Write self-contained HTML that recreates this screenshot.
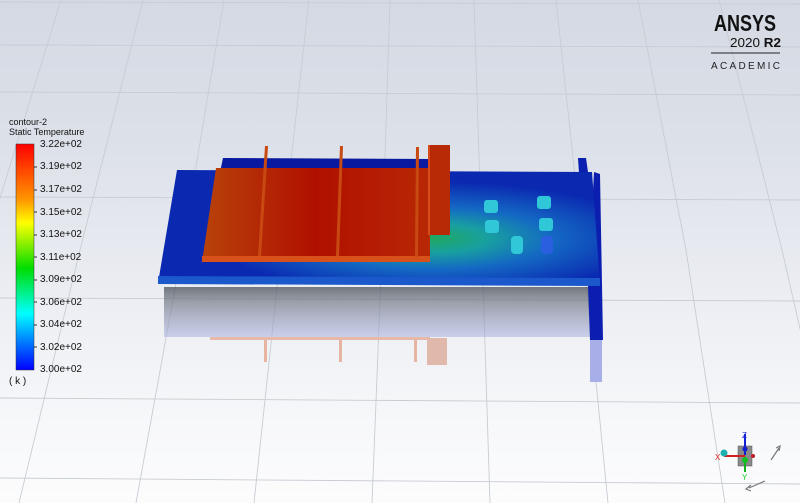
<!DOCTYPE html>
<html><head><style>
html,body{margin:0;padding:0}
body{width:800px;height:503px;overflow:hidden;position:relative;font-family:"Liberation Sans",sans-serif;background:linear-gradient(#d4d9e3 0%,#dde1e9 30%,#eceef3 60%,#f7f8fa 85%,#fcfcfd 100%)}
.t{position:absolute;font-size:10px;color:#111;}
</style></head><body>
<svg width="800" height="503" style="position:absolute;left:0;top:0">
<defs>
<linearGradient id="redg" x1="0" x2="1" y1="0" y2="0">
<stop offset="0" stop-color="#b8420a"/><stop offset="0.5" stop-color="#b01000"/><stop offset="1" stop-color="#b82805"/></linearGradient>
<radialGradient id="plate" cx="0.62" cy="0.6" r="0.5">
<stop offset="0" stop-color="#20a860"/><stop offset="0.25" stop-color="#18a0a0"/><stop offset="0.55" stop-color="#1468c4"/><stop offset="1" stop-color="#0a28b0"/></radialGradient>
<linearGradient id="refl" x1="0" x2="0" y1="0" y2="1">
<stop offset="0" stop-color="#4a5058"/><stop offset="0.3" stop-color="#6c7280" stop-opacity="0.85"/><stop offset="1" stop-color="#a8b0e0" stop-opacity="0.7"/></linearGradient>
<linearGradient id="cb" x1="0" x2="0" y1="0" y2="1">
<stop offset="0" stop-color="#ff0000"/><stop offset="0.25" stop-color="#ff9900"/><stop offset="0.35" stop-color="#ffff00"/><stop offset="0.55" stop-color="#00dd00"/><stop offset="0.75" stop-color="#00ffff"/><stop offset="0.88" stop-color="#0077ff"/><stop offset="1" stop-color="#0000ff"/></linearGradient>
</defs>
<g stroke="#c8ccd3" stroke-width="0.9" fill="none">
<line x1="0" y1="2" x2="800" y2="4"/><line x1="0" y1="45" x2="800" y2="47"/><line x1="0" y1="92" x2="800" y2="95"/><line x1="0" y1="197" x2="800" y2="200"/><line x1="0" y1="298" x2="800" y2="301"/><line x1="0" y1="398" x2="800" y2="403"/><line x1="0" y1="478" x2="800" y2="484"/>
<polyline points="61,0 -16,250"/>
<polyline points="143,0 80,250 19,503"/>
<polyline points="224,0 182,250 136,503"/>
<polyline points="309,0 281,250 254,503"/>
<polyline points="390,0 382,250 372,503"/>
<polyline points="474,0 482,250 490,503"/>
<polyline points="556,0 583,250 608,503"/>
<polyline points="638,0 686,250 725,503"/>
<polyline points="719,0 782,250 840,503"/>
</g>
<!-- reflection -->
<rect x="164" y="287" width="428" height="50" fill="url(#refl)" opacity="0.75"/>
<rect x="590" y="340" width="12" height="42" fill="#a8aee8"/>
<rect x="210" y="337" width="220" height="3" fill="#e8b8a8"/>
<rect x="264" y="340" width="3" height="22" fill="#e6b4a0"/><rect x="339" y="340" width="3" height="22" fill="#e6b4a0"/><rect x="414" y="340" width="3" height="22" fill="#e6b4a0"/>
<rect x="427" y="338" width="20" height="27" fill="#e0b8ac"/>
<!-- back strip -->
<polygon points="223,158 430,159 430,172 220,172" fill="#0a1aa0"/>
<!-- flange -->
<polygon points="578,158 586,158 588,172 579,173" fill="#0a20b0"/>
<polygon points="594,172 600,174 603,340 590,340 588,285" fill="#0c1eb0"/>
<!-- blue plate -->
<polygon points="177,170 592,172 600,284 158,283" fill="url(#plate)"/>
<polygon points="158,276 600,278 600,286 158,284" fill="#1a58cc"/>
<!-- red plate -->
<polygon points="216,168 430,168 430,262 202,262" fill="url(#redg)"/>
<rect x="202" y="256" width="228" height="6" fill="#d8501a"/>
<rect x="428" y="145" width="22" height="90" fill="#b82a05"/>
<rect x="428" y="145" width="2" height="90" fill="#d84a1a"/>
<!-- fins -->
<polygon points="265,146 268,146 261,256 258,256" fill="#c84a12"/>
<polygon points="340,146 343,146 339,256 336,256" fill="#c84a12"/>
<polygon points="416,147 419,147 418,257 415,257" fill="#c84a12"/>
<!-- bumps -->
<g fill="#30c8d8">
<rect x="484" y="200" width="14" height="13" rx="3"/><rect x="485" y="220" width="14" height="13" rx="3"/>
<rect x="537" y="196" width="14" height="13" rx="3"/><rect x="539" y="218" width="14" height="13" rx="3"/>
<rect x="511" y="236" width="12" height="18" rx="4"/>
</g>
<rect x="541" y="236" width="12" height="18" rx="4" fill="#2a60e0"/>
<!-- colorbar -->
<rect x="16" y="144" width="18" height="226" fill="url(#cb)" stroke="#333" stroke-width="0.5"/>
<g stroke="#333" stroke-width="1">
<line x1="34" y1="167" x2="37" y2="167"/><line x1="34" y1="190" x2="37" y2="190"/><line x1="34" y1="212" x2="37" y2="212"/><line x1="34" y1="235" x2="37" y2="235"/><line x1="34" y1="257" x2="37" y2="257"/><line x1="34" y1="280" x2="37" y2="280"/><line x1="34" y1="302" x2="37" y2="302"/><line x1="34" y1="325" x2="37" y2="325"/><line x1="34" y1="347" x2="37" y2="347"/>
</g>
<!-- ANSYS logo -->
<text x="714" y="31" font-family="Liberation Sans" font-weight="bold" font-size="23" fill="#111" textLength="62" lengthAdjust="spacingAndGlyphs">ANSYS</text>
<text x="730" y="47" font-family="Liberation Sans" font-size="13" fill="#111" textLength="51" lengthAdjust="spacingAndGlyphs">2020 <tspan font-weight="bold">R2</tspan></text>
<line x1="711" y1="53" x2="780" y2="53" stroke="#222" stroke-width="1"/>
<text x="711" y="69" font-family="Liberation Sans" font-size="10" fill="#222" textLength="69" lengthAdjust="spacing">ACADEMIC</text>
<!-- triad -->
<rect x="738" y="446" width="14" height="20" fill="#8a8a8a" stroke="#555" stroke-width="0.5"/>
<line x1="745" y1="455" x2="745" y2="434" stroke="#1020d0" stroke-width="2"/>
<circle cx="745" cy="449" r="2.5" fill="#1020d0"/>
<text x="742" y="438" font-size="8" fill="#2030e0" font-family="Liberation Sans">Z</text>
<line x1="745" y1="457" x2="745" y2="472" stroke="#10b020" stroke-width="2"/>
<circle cx="745" cy="460" r="3" fill="#10c020"/>
<text x="742" y="480" font-size="8" fill="#20d020" font-family="Liberation Sans">Y</text>
<line x1="745" y1="456" x2="724" y2="456" stroke="#d02020" stroke-width="2"/>
<circle cx="724" cy="453" r="3.5" fill="#20b0b0"/>
<text x="715" y="460" font-size="8" fill="#e02020" font-family="Liberation Sans">X</text>
<circle cx="753" cy="456" r="2" fill="#c02020"/>
<path d="M771,460 L779,448 M776,448 L780,446 L779,451" stroke="#777" fill="none" stroke-width="1.2"/>
<path d="M765,481 L749,488 M751,485 L746,489 L751,491" stroke="#777" fill="none" stroke-width="1.2"/>
</svg>
<div class="t" style="left:9px;top:117px;font-size:9px">contour-2</div>
<div class="t" style="left:9px;top:127px;font-size:9px">Static Temperature</div>
<div class="t" style="left:40px;top:139px">3.22e+02</div>
<div class="t" style="left:40px;top:161px">3.19e+02</div>
<div class="t" style="left:40px;top:184px">3.17e+02</div>
<div class="t" style="left:40px;top:207px">3.15e+02</div>
<div class="t" style="left:40px;top:229px">3.13e+02</div>
<div class="t" style="left:40px;top:252px">3.11e+02</div>
<div class="t" style="left:40px;top:274px">3.09e+02</div>
<div class="t" style="left:40px;top:297px">3.06e+02</div>
<div class="t" style="left:40px;top:319px">3.04e+02</div>
<div class="t" style="left:40px;top:342px">3.02e+02</div>
<div class="t" style="left:40px;top:364px">3.00e+02</div>
<div class="t" style="left:9px;top:376px">( k )</div>
</body></html>
